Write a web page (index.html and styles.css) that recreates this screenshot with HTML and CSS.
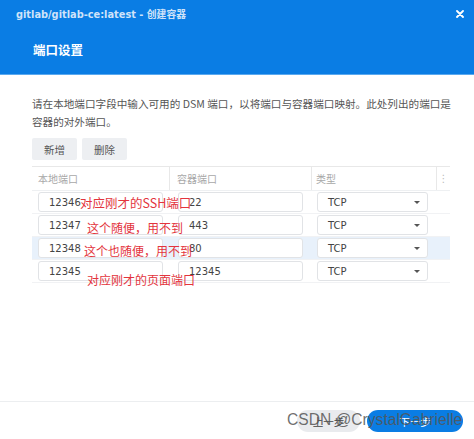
FILE: index.html
```html
<!DOCTYPE html>
<html lang="zh">
<head>
<meta charset="utf-8">
<link rel="stylesheet" href="styles.css">
</head>
<body>
<div class="dialog">
  <header class="hdr">
    <div class="topbar">
      <span class="title">gitlab/gitlab-ce:latest - 创建容器</span>
      <svg class="close" viewBox="0 0 8 8" width="8" height="8"><path d="M1 1L7 7M7 1L1 7" stroke="#fff" stroke-width="1.8" stroke-linecap="round"/></svg>
    </div>
    <h1 class="heading">端口设置</h1>
  </header>
  <main class="content">
    <p class="desc">请在本地端口字段中输入可用的 DSM 端口，以将端口与容器端口映射。此处列出的端口是<br>容器的对外端口。</p>
    <div class="toolbar">
      <button class="btn">新增</button>
      <button class="btn">删除</button>
    </div>
    <div class="table">
      <div class="thead">
        <div class="th c1">本地端口</div>
        <div class="th c2">容器端口</div>
        <div class="th c3">类型</div>
        <div class="th c4">⋮</div>
      </div>
      <div class="row">
        <div class="cell c1"><div class="input">12346</div></div>
        <div class="cell c2"><div class="input">22</div></div>
        <div class="cell c3"><div class="select">TCP<span class="arrow"></span></div></div>
      </div>
      <div class="row">
        <div class="cell c1"><div class="input">12347</div></div>
        <div class="cell c2"><div class="input">443</div></div>
        <div class="cell c3"><div class="select">TCP<span class="arrow"></span></div></div>
      </div>
      <div class="row active">
        <div class="cell c1"><div class="input">12348</div></div>
        <div class="cell c2"><div class="input">80</div></div>
        <div class="cell c3"><div class="select">TCP<span class="arrow"></span></div></div>
      </div>
      <div class="row">
        <div class="cell c1"><div class="input">12345</div></div>
        <div class="cell c2"><div class="input">12345</div></div>
        <div class="cell c3"><div class="select">TCP<span class="arrow"></span></div></div>
      </div>
      <span class="note n1">对应刚才的SSH端口</span>
      <span class="note n2">这个随便，用不到</span>
      <span class="note n3">这个也随便，用不到</span>
      <span class="note n4">对应刚才的页面端口</span>
    </div>
  </main>
  <footer class="foot">
    <button class="fbtn prev">上一步</button>
    <button class="fbtn next">下一步</button>
    <span class="watermark">CSDN @CrystalGabrielle</span>
  </footer>
</div>
</body>
</html>
```

FILE: styles.css
```css
* { box-sizing: border-box; }
html, body { margin: 0; padding: 0; background: #fff; }
body { font-family: "Noto Sans CJK SC", "DejaVu Sans", sans-serif; }

.dialog {
  width: 474px;
  height: 439px;
  display: flex;
  flex-direction: column;
  background: #fff;
}

.hdr {
  height: 75px;
  background: #0a7de4;
  border-bottom: 1px solid #5aa9ef;
}
.topbar {
  height: 28px;
  display: flex;
  align-items: center;
  justify-content: space-between;
  padding: 0 10px 0 16px;
}
.title {
  font-family: "DejaVu Sans", "Noto Sans CJK SC", sans-serif;
  font-weight: bold;
  font-size: 9.8px;
  color: #cfe3f9;
  white-space: nowrap;
}
.close { display: block; }
.heading {
  margin: 13px 0 0 33px;
  font-size: 12.5px;
  line-height: 18px;
  font-weight: bold;
  color: #fff;
}

.content {
  flex: 1;
  padding: 20px 24px 0 32px;
}
.desc {
  margin: 0;
  font-size: 10.6px;
  line-height: 18px;
  color: #555;
  white-space: nowrap;
}
.toolbar {
  display: flex;
  gap: 5px;
  margin-top: 7px;
}
.btn {
  width: 45px;
  height: 22px;
  border: none;
  border-radius: 2px;
  background: #edeff2;
  color: #555;
  font-family: "Noto Sans CJK SC", sans-serif;
  font-size: 10.5px;
  padding: 0;
}

.table {
  position: relative;
  margin-top: 6px;
  width: 418px;
  border-top: 1px solid #e8e8e8;
}
.thead, .row {
  display: grid;
  grid-template-columns: 138px 142px 125px 13px;
}
.thead {
  height: 24px;
  border-bottom: 1px solid #eef0f2;
}
.th {
  font-size: 10px;
  color: #a8a8a8;
  display: flex;
  align-items: center;
  border-right: 1px solid #e8e8e8;
}
.th.c1 { padding-left: 6px; }
.th.c2 { padding-left: 7px; }
.th.c3 { padding-left: 4px; }
.th.c4 { border-right: none; justify-content: center; color: #bbb; font-family: "DejaVu Sans", sans-serif; }

.row {
  height: 23px;
  align-items: center;
  border-bottom: 1px solid #f1f2f4;
}
.row.active { background: #e8f1fb; }
.cell.c1 { padding-left: 6px; }
.cell.c2 { padding-left: 8px; }
.cell.c3 { padding-left: 5px; }

.input, .select {
  height: 20px;
  border: 1px solid #e1e3e6;
  border-radius: 3px;
  background: #fff;
  font-family: "DejaVu Sans", sans-serif;
  font-size: 10px;
  color: #444;
  display: flex;
  align-items: center;
  padding-left: 10px;
}
.input { width: 125px; }
.select {
  width: 111px;
  justify-content: space-between;
  padding-right: 7px;
}
.arrow {
  width: 0;
  height: 0;
  border-left: 3.5px solid transparent;
  border-right: 3.5px solid transparent;
  border-top: 3.5px solid #555;
}

.note {
  position: absolute;
  color: #e3343d;
  font-size: 12px;
  line-height: 14px;
  white-space: nowrap;
  font-family: "Noto Sans CJK SC", sans-serif;
}
.n1 { left: 48px; top: 29px; font-size: 12.5px; }
.n2 { left: 55px; top: 54px; }
.n3 { left: 52px; top: 77px; }
.n4 { left: 55px; top: 106px; }

.foot {
  position: relative;
  height: 38px;
  border-top: 1px solid #eceef0;
  display: flex;
  justify-content: flex-end;
  align-items: flex-start;
  gap: 7px;
  padding: 8px 11px 0 0;
}
.fbtn {
  height: 22px;
  border: none;
  border-radius: 11px;
  font-family: "Noto Sans CJK SC", sans-serif;
  font-size: 10.5px;
  padding: 0;
}
.prev { width: 63px; background: #e9ebee; color: #444; }
.next { width: 96px; background: #0a7de4; color: #fff; }
.watermark {
  position: absolute;
  left: 287px;
  top: 9px;
  font-family: "Liberation Sans", sans-serif;
  font-size: 15.6px;
  color: rgba(85, 85, 85, 0.85);
  white-space: nowrap;
}
```
